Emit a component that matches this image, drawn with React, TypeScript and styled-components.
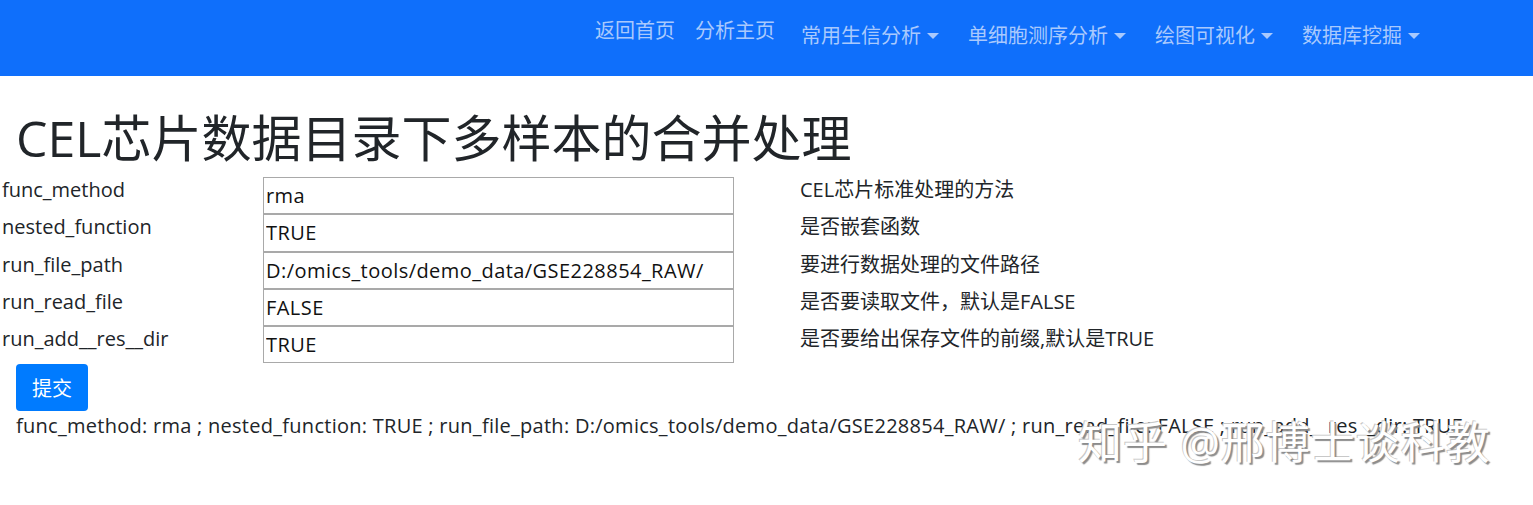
import styled, { createGlobalStyle } from "styled-components"

const GlobalStyle = createGlobalStyle`
  body {
    margin: 0;
    background: #fff;
    color: #212529;
    font-family: "Open Sans", "Noto Sans CJK SC", sans-serif;
  }
`

const Page = styled.div`
  position: relative;
  width: 1533px;
  height: 505px;
  overflow: hidden;
`

const Navbar = styled.nav`
  height: 76px;
  background: #0f6ffb;
  display: flex;
  justify-content: flex-end;
  align-items: flex-start;
  padding-right: 113px;
`

const NavLink = styled.a<{ $drop?: boolean }>`
  display: flex;
  align-items: center;
  gap: 6px;
  font-size: 20px;
  line-height: 24px;
  color: #a9c9fd;
  margin-top: ${(p) => (p.$drop ? "24px" : "19px")};
  margin-right: ${(p) => (p.$drop ? "29px" : "20px")};
  text-decoration: none;
  white-space: nowrap;
  &:nth-child(2) {
    margin-right: 26px;
  }
  &:last-child {
    margin-right: 0;
  }
`

const Caret = styled.span`
  width: 0;
  height: 0;
  border-left: 6px solid transparent;
  border-right: 6px solid transparent;
  border-top: 6px solid #a9c9fd;
`

const Title = styled.h1`
  margin: 32px 0 9px;
  padding-left: 16px;
  font-size: 50px;
  line-height: 60px;
  font-weight: 400;
  color: #212529;
`

const Form = styled.div`
  display: grid;
  grid-template-columns: 261px 471px auto;
  padding-left: 2px;
`

const Label = styled.div`
  font-size: 20px;
  line-height: 26px;
  align-self: start;
`

const Input = styled.input`
  box-sizing: border-box;
  width: 471px;
  height: 37.3px;
  border: 1px solid #a9a9a9;
  padding: 0 2px;
  font-size: 20px;
  letter-spacing: 0.45px;
  font-family: inherit;
  color: #111;
  background: #fff;
  outline: none;
`

const Desc = styled.div`
  padding-left: 66px;
  font-size: 20px;
  line-height: 26px;
  align-self: start;
`

const SubmitButton = styled.button`
  margin: 1px 0 0 16px;
  height: 47px;
  width: 72px;
  border: none;
  border-radius: 4px;
  background: #007bff;
  color: #fff;
  font-size: 20px;
  font-family: inherit;
  padding: 0;
`

const Result = styled.div`
  padding-left: 16px;
  margin-top: 2px;
  font-size: 20px;
  line-height: 26px;
  letter-spacing: 0.27px;
  white-space: nowrap;
`

const Watermark = styled.div`
  position: absolute;
  left: 1078px;
  top: 414px;
  font-size: 44px;
  line-height: 56px;
  color: #fff;
  text-shadow: 2px 2px 1px #8c8c8c, -1px -1px 0 #c8c8c8;
  letter-spacing: 1px;
  white-space: nowrap;
`

const params = [
  { name: "func_method", value: "rma", desc: "CEL芯片标准处理的方法" },
  { name: "nested_function", value: "TRUE", desc: "是否嵌套函数" },
  { name: "run_file_path", value: "D:/omics_tools/demo_data/GSE228854_RAW/", desc: "要进行数据处理的文件路径" },
  { name: "run_read_file", value: "FALSE", desc: "是否要读取文件，默认是FALSE" },
  { name: "run_add__res__dir", value: "TRUE", desc: "是否要给出保存文件的前缀,默认是TRUE" },
]

export default function App() {
  return (
    <Page>
      <GlobalStyle />
      <Navbar>
        <NavLink>返回首页</NavLink>
        <NavLink>分析主页</NavLink>
        <NavLink $drop>常用生信分析<Caret /></NavLink>
        <NavLink $drop>单细胞测序分析<Caret /></NavLink>
        <NavLink $drop>绘图可视化<Caret /></NavLink>
        <NavLink $drop>数据库挖掘<Caret /></NavLink>
      </Navbar>
      <Title>CEL芯片数据目录下多样本的合并处理</Title>
      <Form>
        {params.map((p) => (
          <>
            <Label key={p.name + "l"}>{p.name}</Label>
            <Input key={p.name + "i"} defaultValue={p.value} />
            <Desc key={p.name + "d"}>{p.desc}</Desc>
          </>
        ))}
      </Form>
      <SubmitButton>提交</SubmitButton>
      <Result>{params.map((p) => `${p.name}: ${p.value}`).join(" ; ")}</Result>
      <Watermark>知乎 @邢博士谈科教</Watermark>
    </Page>
  )
}
